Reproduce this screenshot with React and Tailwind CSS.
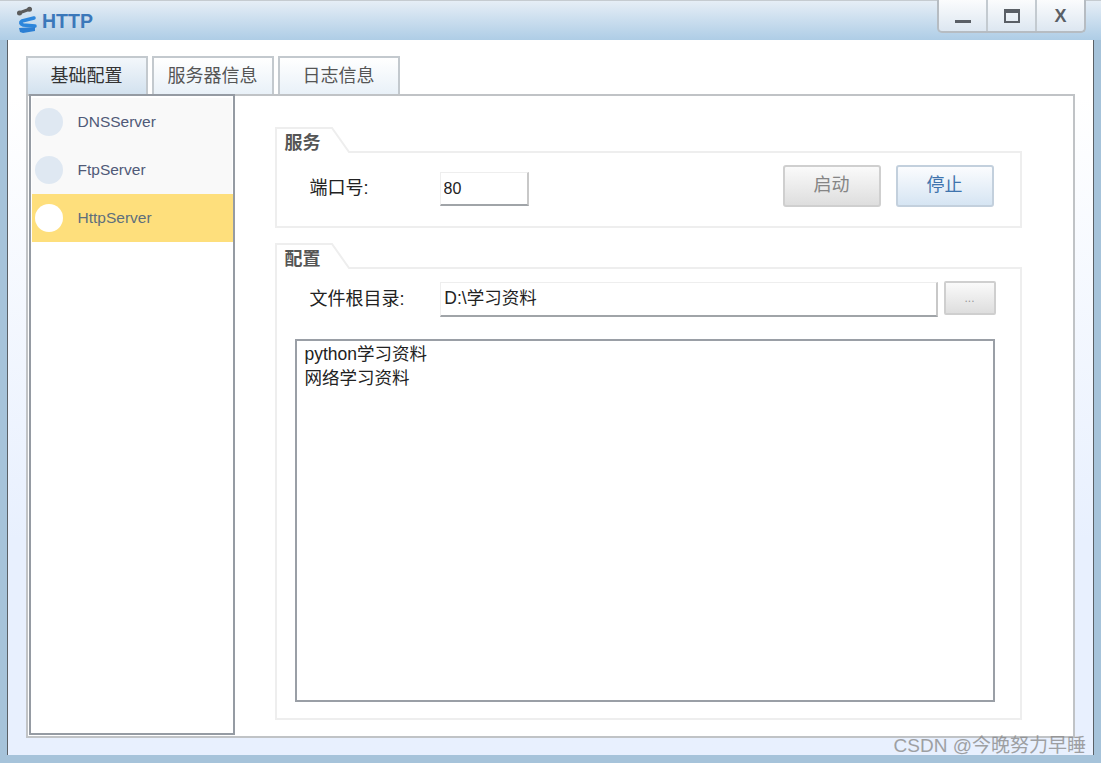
const font = { fontFamily: '"Liberation Sans","Noto Sans CJK SC",sans-serif' };

function Tab({ label, active, w = "w-[122px]" }) {
  return (
    <div className={`${w} h-[38px] flex items-center justify-center border-2 border-b-0 border-[#c3c9ce] text-[18px] ${active ? "bg-gradient-to-b from-[#f3f7fb] to-[#d3e2ef] text-[#333]" : "bg-gradient-to-b from-white to-[#e9f1f8] text-[#555]"}`}>
      {label}
    </div>
  );
}

function SideItem({ label, active }) {
  return (
    <div className={`h-12 w-[201px] flex items-center pl-[3px] ${active ? "bg-[#fedf7c]" : ""}`}>
      <span className={`w-7 h-7 rounded-full ${active ? "bg-white" : "bg-[#dfe8f2]"}`} />
      <span className={`ml-[15px] text-[15.5px] ${active ? "text-[#5e6f7c]" : "text-[#505a78]"}`}>{label}</span>
    </div>
  );
}

function Group({ title, className, children }) {
  return (
    <section className={`w-[747px] flex flex-col ${className}`}>
      <div className="flex h-[26px] shrink-0">
        <div className="w-[47px] border-t-2 border-l-2 border-[#eeeeee] flex items-center pl-2 text-[18px] font-bold text-[#555] leading-none pt-1 whitespace-nowrap">
          {title}
        </div>
        <svg width="28" height="26" className="shrink-0">
          <path d="M0 1 L10 1 L27 25 L28 25" stroke="#eeeeee" strokeWidth="2" fill="none" />
        </svg>
        <div className="flex-1 border-b-2 border-[#eeeeee]" />
      </div>
      <div className="flex-1 min-h-0 border-2 border-t-0 border-[#eeeeee]">{children}</div>
    </section>
  );
}

const Btn = ({ label, blue }) => (
  <button className={`w-[98px] h-[42px] rounded-[3px] border-2 text-[18px] ${blue ? "border-[#c3d0dd] bg-gradient-to-b from-[#fbfcfe] to-[#d6e5f3] text-[#3f74ad]" : "border-[#cfcfcf] bg-gradient-to-b from-[#fafafa] to-[#dedede] text-[#858585]"}`}>
    {label}
  </button>
);

export default function App() {
  return (
    <div style={font} className="relative w-[1101px] h-[763px] overflow-hidden flex flex-col bg-[#a6c3da] text-[#222]">
      <header className="h-10 shrink-0 flex items-start bg-gradient-to-b from-[#e6eef6] to-[#aecde6] pl-[14px] pr-[15px] border-t border-[#c5cbd0]">
        <svg width="24" height="28" viewBox="0 0 24 28" className="mt-[5px] shrink-0">
          <path d="M5 7 L16 3" stroke="#5c5c5c" strokeWidth="3" strokeLinecap="round" />
          <circle cx="5.5" cy="7" r="2.5" fill="#5c5c5c" />
          <circle cx="15.5" cy="3.2" r="2.5" fill="#5c5c5c" />
          <path d="M20 12 L8 15 Q5 17 9 19 L21 20" stroke="#2c86dc" strokeWidth="3.5" fill="none" strokeLinecap="round" strokeLinejoin="round" />
          <path d="M5 22 L21 21 L21 25 L9 27 L6 26 Z" fill="#2c7fd4" />
        </svg>
        <span className="ml-1 mt-[9px] text-[19.5px] leading-[22px] font-bold text-[#3b78ba]">HTTP</span>
        <div className="ml-auto -mt-px h-[33px] w-[149px] flex border-2 border-t-0 border-[#b6bcc2] rounded-b-[5px] bg-gradient-to-b from-[#fbfcfd] to-[#dde7f1] text-[#5a5f66]">
          <div className="flex-1 flex items-center justify-center border-r-2 border-[#c3cad0]">
            <span className="w-4 h-[3px] mt-[11px] bg-[#5a5f66]" />
          </div>
          <div className="flex-1 flex items-center justify-center border-r-2 border-[#c3cad0]">
            <span className="w-4 h-[14px] border-2 border-t-[4px] border-[#5a5f66]" />
          </div>
          <div className="flex-1 flex items-center justify-center text-[18px] font-bold leading-none">X</div>
        </div>
      </header>

      <div className="flex-1 min-h-0 mx-[7px] mb-[8px] border-x-[1.5px] border-x-[#5a6066] bg-gradient-to-b from-white from-[8%] to-[#e8f0fe] to-[70%] pt-4 pl-[17.5px] pr-[15.5px] flex flex-col">
        <nav className="flex gap-1 h-[38px] shrink-0">
          <Tab label="基础配置" active />
          <Tab label="服务器信息" />
          <Tab label="日志信息" />
        </nav>
        <main className="w-[1049px] h-[644px] border-2 border-[#c0c3c6] bg-white flex">
          <aside className="ml-px -mt-[2px] w-[206px] h-[641px] border-2 border-[#959ba3] bg-white pl-[1px] pt-[2px] shrink-0">
            <div className="bg-[#f9f9f9] w-[200px] h-24">
              <SideItem label="DNSServer" />
              <SideItem label="FtpServer" />
            </div>
            <SideItem label="HttpServer" active />
          </aside>
          <div className="ml-[40px] pt-[31px] flex flex-col gap-[15px]">
            <Group title="服务" className="h-[101px]">
              <div className="flex items-center h-[73px] pb-[8px] text-[18px]">
                <span className="ml-[33px] mt-[6px] w-[130px]">端口号:</span>
                <input readOnly value="80" className="w-[89px] h-[34px] mt-[7px] pl-[3px] text-[16px] border border-[#eeeeee] border-b-2 border-r-2 border-b-[#a0a4a8] border-r-[#c8c8c8] outline-none" style={font} />
                <div className="ml-auto mr-[26px] flex gap-[15px]">
                  <Btn label="启动" />
                  <Btn label="停止" blue />
                </div>
              </div>
            </Group>
            <Group title="配置" className="h-[477px]">
              <div className="pl-[18px] pr-[24px] pt-[12px] text-[17.5px]">
                <div className="flex items-center h-[36px]">
                  <span className="ml-[15px] w-[131px] text-[18px]">文件根目录:</span>
                  <div className="w-[498px] h-[35px] flex items-center pl-[3px] border border-[#eeeeee] border-b-2 border-r-2 border-b-[#a0a4a8] border-r-[#c8c8c8]">D:\学习资料</div>
                  <button className="ml-[6px] -mt-[2px] w-[52px] h-[34px] rounded-[2px] border-2 border-[#cfcfcf] bg-gradient-to-b from-[#fafafa] to-[#dedede] text-[#9a9a9a] text-[12px]">...</button>
                </div>
                <div className="mt-[22px] w-[700px] h-[363px] border-2 border-[#9a9fa6] pl-2 pt-[1px] leading-6">
                  <div>python学习资料</div>
                  <div>网络学习资料</div>
                </div>
              </div>
            </Group>
          </div>
        </main>
      </div>
      <span className="absolute right-[15px] bottom-[5px] text-[19px] leading-6 text-[#8c8c8c] opacity-80">CSDN @今晚努力早睡</span>
    </div>
  );
}
